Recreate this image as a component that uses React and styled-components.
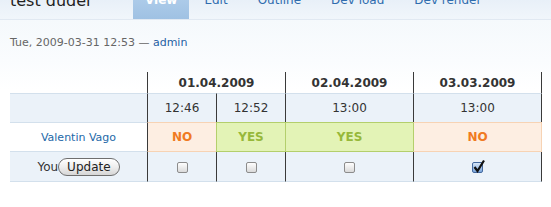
import React from 'react'
import styled, { createGlobalStyle } from 'styled-components'

const GlobalStyle = createGlobalStyle`
  body {
    margin: 0;
    min-height: 207px;
    font-family: "DejaVu Sans", Verdana, sans-serif;
    background: #fff linear-gradient(#eef4fa 0, #f5f9fc 20px, #fafcfe 60px, #fff 90px) no-repeat;
  }
`;

const Header = styled.div`
  display: flex;
  height: 19px;
  padding-left: 10px;
  overflow: hidden;
  border-bottom: 1px solid #e1e9f2;
  background: linear-gradient(#e8f0f8, #f1f6fb);
`;

const Title = styled.h1`
  width: 123px;
  margin: -9px 0 0;
  font-size: 16px;
  line-height: 20px;
  font-weight: normal;
  color: #222;
  white-space: nowrap;
`;

const Tabs = styled.ul`
  display: flex;
  margin: -10px 0 0;
  padding: 0;
  list-style: none;
`;

const Tab = styled.li`
  padding: 0 ${p => (p.$active ? 12 : 15)}px;
  font-size: 12px;
  line-height: 21px;
  font-weight: ${p => (p.$active ? 'bold' : 'normal')};
  color: ${p => (p.$active ? '#fff' : '#2f6cae')};
  background: ${p => (p.$active ? 'linear-gradient(#b3d0ec, #9fc1e3)' : 'none')};
  white-space: nowrap;
`;

const Meta = styled.p`
  margin: 16px 10px 0;
  font-size: 11px;
  line-height: 14px;
  color: #666;
`;

const Author = styled.a`
  color: #1f60a2;
  text-decoration: none;
`;

const Poll = styled.table`
  margin: 22px 0 0 10px;
  width: 532px;
  table-layout: fixed;
  border-collapse: separate;
  border-spacing: 0;
  font-size: 12px;
  color: #333;
`;

const Row = styled.tr`
  height: ${p => p.$h}px;
  background: ${p => (p.$shaded ? '#ebf2f9' : 'transparent')};
`;

const DARK = '#3a3a3a';
const LIGHT = '#d3e0ec';
const GREEN = '#b4cf6c';
const PEACH = '#f7d3b4';

const Cell = styled.td`
  padding: 0;
  text-align: center;
  vertical-align: middle;
  white-space: nowrap;
  border-left: ${p => (p.$left ? `1px solid ${p.$left}` : 'none')};
  border-right: ${p => (p.$right ? `1px solid ${p.$right}` : 'none')};
  border-top: ${p => (p.$top ? `1px solid ${p.$top}` : 'none')};
  border-bottom: ${p => (p.$bottom ? `1px solid ${p.$bottom}` : 'none')};
`;

const DateCell = styled(Cell)`
  font-weight: bold;
`;

const Answer = styled(Cell)`
  font-weight: bold;
  color: ${p => (p.$yes ? '#97b83a' : '#f07a22')};
  background: ${p => (p.$yes ? '#e3f3b6' : '#fdeee2')};
`;

const Name = styled.a`
  font-size: 11px;
  color: #2468a8;
  text-decoration: none;
`;

const You = styled.span`
  display: inline-flex;
  align-items: center;
  font-size: 12px;
  color: #333;
`;

const UpdateButton = styled.button`
  height: 18px;
  padding: 0 8px;
  font-family: inherit;
  font-size: 12px;
  line-height: 16px;
  color: #222;
  border: 1px solid #6f6f6f;
  border-radius: 9px;
  background: linear-gradient(#ffffff, #eeeeee 50%, #d6d6d6);
  box-shadow: inset 0 1px 0 #fff;
`;

const Box = styled.span`
  position: relative;
  display: inline-block;
  width: 11px;
  height: 11px;
  box-sizing: border-box;
  vertical-align: middle;
  border: 1px solid ${p => (p.$checked ? '#44699f' : '#8c8c8c')};
  border-radius: 2px;
  background: ${p =>
    p.$checked
      ? 'linear-gradient(#d6e6f8, #7ca6dc)'
      : 'linear-gradient(#fefefe, #dadada)'};
`;

const Tick = styled.svg`
  position: absolute;
  left: 0;
  top: -4px;
`;

const Checkbox = ({ checked }) => (
  <Box $checked={checked}>
    {checked && (
      <Tick width="13" height="14" viewBox="0 0 13 14">
        <path d="M1.5 8 L4.5 12 L11 1.5" fill="none" stroke="#111" strokeWidth="2.2" />
      </Tick>
    )}
  </Box>
);

const dates = [
  { label: '01.04.2009', span: 2 },
  { label: '02.04.2009', span: 1 },
  { label: '03.03.2009', span: 1 },
];
const times = ['12:46', '12:52', '13:00', '13:00'];
const answers = [false, true, true, false];
const mine = [false, false, false, true];

const last = i => i === times.length - 1;

const App = () => (
  <>
    <GlobalStyle />
    <Header>
      <Title>test dudel</Title>
      <Tabs>
        <Tab $active>View</Tab>
        <Tab>Edit</Tab>
        <Tab>Outline</Tab>
        <Tab>Dev load</Tab>
        <Tab>Dev render</Tab>
      </Tabs>
    </Header>
    <Meta>
      Tue, 2009-03-31 12:53 — <Author href="#">admin</Author>
    </Meta>
    <Poll>
      <colgroup>
        <col style={{ width: 137 }} />
        <col style={{ width: 69 }} />
        <col style={{ width: 69 }} />
        <col style={{ width: 128 }} />
        <col style={{ width: 129 }} />
      </colgroup>
      <tbody>
        <Row $h={21}>
          <Cell />
          {dates.map((d, i) => (
            <DateCell
              key={d.label}
              colSpan={d.span}
              $left={DARK}
              $right={i === dates.length - 1 ? DARK : null}
            >
              {d.label}
            </DateCell>
          ))}
        </Row>
        <Row $h={29} $shaded>
          <Cell $top={LIGHT} />
          {times.map((t, i) => (
            <Cell key={i} $top={LIGHT} $left={DARK} $right={last(i) ? DARK : null}>
              {t}
            </Cell>
          ))}
        </Row>
        <Row $h={30}>
          <Cell $top={LIGHT} $bottom={LIGHT}>
            <Name href="#">Valentin Vago</Name>
          </Cell>
          {answers.map((yes, i) => {
            const own = yes ? GREEN : PEACH;
            const left = i === 0 ? DARK : yes || answers[i - 1] ? GREEN : PEACH;
            return (
              <Answer
                key={i}
                $yes={yes}
                $top={own}
                $bottom={own}
                $left={left}
                $right={last(i) ? own : null}
              >
                {yes ? 'YES' : 'NO'}
              </Answer>
            );
          })}
        </Row>
        <Row $h={30} $shaded>
          <Cell $bottom={LIGHT}>
            <You>
              You
              <UpdateButton>Update</UpdateButton>
            </You>
          </Cell>
          {mine.map((c, i) => (
            <Cell key={i} $bottom={LIGHT} $left={DARK} $right={last(i) ? DARK : null}>
              <Checkbox checked={c} />
            </Cell>
          ))}
        </Row>
      </tbody>
    </Poll>
  </>
);

export default App
